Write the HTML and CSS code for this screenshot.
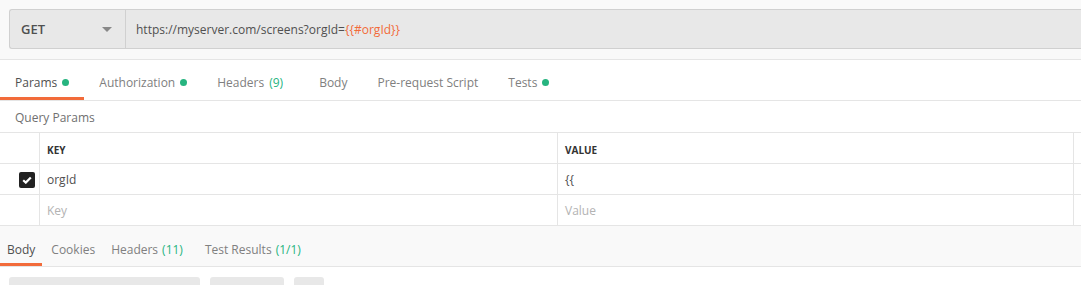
FILE: index.html
```html
<!DOCTYPE html>
<html lang="en">
<head>
  <meta charset="UTF-8">
  <title>Request Builder</title>
  <link rel="stylesheet" href="styles.css">
</head>
<body>
  <div class="request-bar-wrap">
    <div class="request-bar">
      <div class="method">
        <span>GET</span>
        <span class="caret"></span>
      </div>
      <div class="url">https://myserver.com/screens?orgId=<span class="var">{{#orgId}}</span></div>
    </div>
  </div>

  <div class="tabs">
    <div class="tab active">Params <span class="dot"></span></div>
    <div class="tab">Authorization <span class="dot"></span></div>
    <div class="tab">Headers <span class="count">(9)</span></div>
    <div class="tab">Body</div>
    <div class="tab">Pre-request Script</div>
    <div class="tab">Tests <span class="dot"></span></div>
  </div>

  <div class="section-title">Query Params</div>

  <div class="params">
    <div class="cell check"></div>
    <div class="cell head">KEY</div>
    <div class="cell head">VALUE</div>
    <div class="cell head">DESCRIPTION</div>

    <div class="cell check">
      <span class="checkbox">
        <svg width="10" height="8" viewBox="0 0 10 8"><path d="M1.2 4.2 L3.8 6.6 L8.8 1.4" fill="none" stroke="#fff" stroke-width="2.2"/></svg>
      </span>
    </div>
    <div class="cell">orgId</div>
    <div class="cell">{{</div>
    <div class="cell"></div>

    <div class="cell check"></div>
    <div class="cell placeholder">Key</div>
    <div class="cell placeholder">Value</div>
    <div class="cell"></div>
  </div>

  <div class="response">
    <div class="tabs small">
      <div class="tab active">Body</div>
      <div class="tab">Cookies</div>
      <div class="tab">Headers <span class="count">(11)</span></div>
      <div class="tab">Test Results <span class="count">(1/1)</span></div>
    </div>
  </div>

  <div class="skeleton">
    <div class="bar" style="width: 191px;"></div>
    <div class="bar" style="width: 74px;"></div>
    <div class="bar" style="width: 30px;"></div>
  </div>
</body>
</html>
```

FILE: styles.css
```css
:root {
  --text-color: #505050;
  --muted: #808080;
  --orange: #f26b3a;
  --green: #26b47f;
  --line: #e5e5e5;
  --bar-bg: #e8e8e8;
  --bar-border: #d0d0d0;
  --panel: #f9f9f9;
}

* {
  box-sizing: border-box;
  margin: 0;
  padding: 0;
}

body {
  font-family: "Open Sans", "Liberation Sans", sans-serif;
  font-size: 12px;
  color: var(--text-color);
  background-color: white;
  overflow: hidden;
}

.request-bar-wrap {
  background-color: var(--panel);
  padding: 9px 0 10px 9px;
  border-bottom: 1px solid var(--line);
}

.request-bar {
  display: flex;
  height: 40px;
  background-color: var(--bar-bg);
  border: 1px solid var(--bar-border);
  border-right: none;
  border-radius: 3px 0 0 3px;
}

.method {
  width: 116px;
  display: flex;
  align-items: center;
  justify-content: space-between;
  padding: 0 13px 0 11px;
  border-right: 1px solid var(--bar-border);
  font-weight: 600;
  font-size: 13px;
}

.caret {
  width: 0;
  height: 0;
  border-left: 5px solid transparent;
  border-right: 5px solid transparent;
  border-top: 5px solid #888;
}

.url {
  display: flex;
  align-items: center;
  padding-left: 10px;
  font-size: 12px;
}

.url .var {
  color: var(--orange);
}

.tabs {
  display: flex;
  height: 41px;
  border-bottom: 1px solid var(--line);
}

.tab {
  display: flex;
  align-items: center;
  padding: 8px 15px 0;
  border-bottom: 3px solid transparent;
  color: var(--muted);
  white-space: nowrap;
}

.tab.active {
  color: var(--text-color);
  border-bottom-color: var(--orange);
}

.dot {
  display: inline-block;
  width: 7px;
  height: 7px;
  border-radius: 50%;
  background-color: var(--green);
  margin-left: 5px;
}

.count {
  color: var(--green);
  margin-left: 5px;
  margin-right: 6px;
}

.section-title {
  height: 32px;
  display: flex;
  align-items: center;
  padding: 2px 0 0 15px;
  color: #707070;
  border-bottom: 1px solid var(--line);
}

.params {
  display: grid;
  grid-template-columns: 40px 518px 516px 1fr;
}

.cell {
  height: 31px;
  display: flex;
  align-items: center;
  padding-left: 7px;
  border-bottom: 1px solid var(--line);
  border-right: 1px solid var(--line);
  white-space: nowrap;
  overflow: hidden;
}

.cell.head {
  padding-top: 3px;
  font-size: 10px;
  font-weight: 700;
  color: #333;
}

.cell.check {
  justify-content: flex-end;
  padding: 1px 4px 0 0;
}

.cell.placeholder {
  color: #b3b3b3;
}

.checkbox {
  width: 16px;
  height: 16px;
  border-radius: 2px;
  background-color: #222;
  display: flex;
  align-items: center;
  justify-content: center;
}

.response {
  background-color: var(--panel);
}

.tabs.small .tab {
  padding: 10px 7px 0;
  margin-right: 2px;
}

.tabs.small .count {
  margin-left: 4px;
  margin-right: 6px;
}

.skeleton {
  display: flex;
  gap: 10px;
  padding: 10px 0 0 9px;
}

.skeleton .bar {
  height: 20px;
  background-color: var(--bar-bg);
  border-radius: 3px;
}
```
